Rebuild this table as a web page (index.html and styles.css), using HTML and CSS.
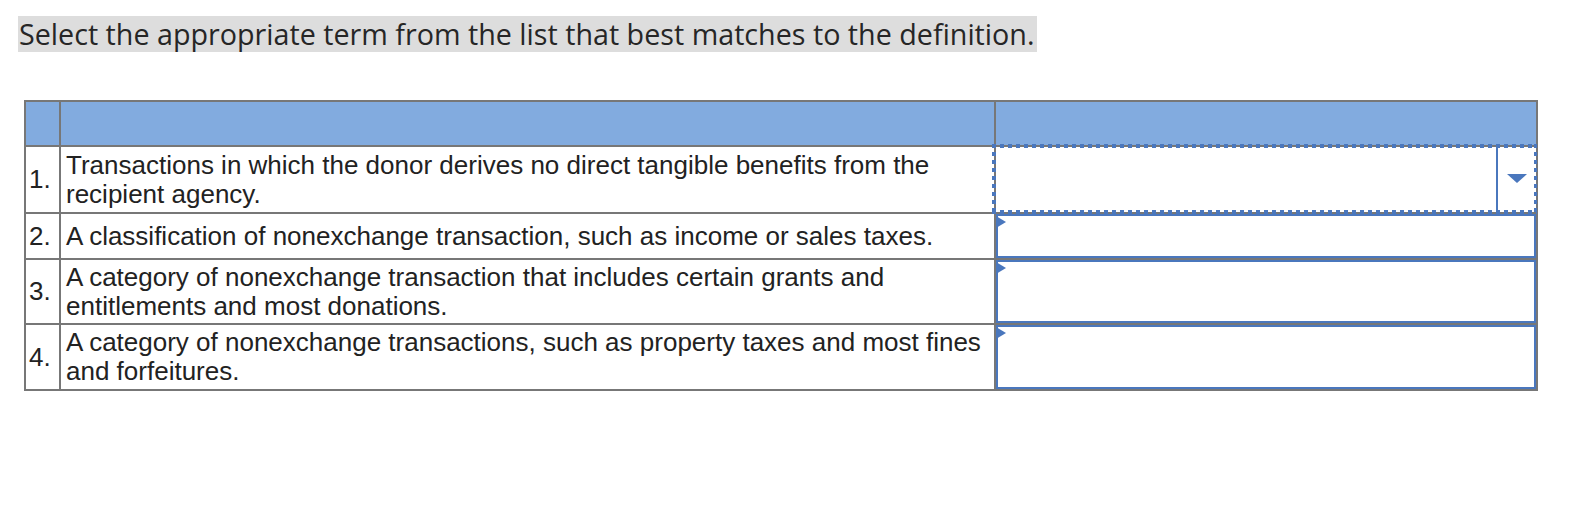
FILE: index.html
```html
<!DOCTYPE html>
<html lang="en">
<head>
<meta charset="utf-8">
<title>Matching</title>
<link rel="stylesheet" href="styles.css">
</head>
<body>
<main class="page">
  <p class="prompt"><span class="prompt__label">Select the appropriate term from the list that best matches to the definition.</span></p>
  <table class="match">
    <thead>
      <tr>
        <th class="num"></th>
        <th class="def"></th>
        <th class="ans"></th>
      </tr>
    </thead>
    <tbody>
      <tr>
        <td class="num">1.</td>
        <td class="def">Transactions in which the donor derives no direct tangible benefits from the recipient agency.</td>
        <td class="ans">
          <div class="select select--focused">
            <span class="select__value"></span>
            <span class="select__btn">
              <svg class="select__arrow" width="20" height="9" viewBox="0 0 20 9" aria-hidden="true"><polygon points="0,0 20,0 10,9"/></svg>
            </span>
          </div>
        </td>
      </tr>
      <tr>
        <td class="num">2.</td>
        <td class="def">A classification of nonexchange transaction, such as income or sales taxes.</td>
        <td class="ans"><div class="answer answer--h44"></div></td>
      </tr>
      <tr>
        <td class="num">3.</td>
        <td class="def">A category of nonexchange transaction that includes certain grants and entitlements and most donations.</td>
        <td class="ans"><div class="answer answer--h63"></div></td>
      </tr>
      <tr>
        <td class="num">4.</td>
        <td class="def">A category of nonexchange transactions, such as property taxes and most fines and forfeitures.</td>
        <td class="ans"><div class="answer answer--h64"></div></td>
      </tr>
    </tbody>
  </table>
</main>
</body>
</html>
```

FILE: styles.css
```css
:root {
  --grey: #777777;
  --blue: #4a77bd;
  --head: #82abdf;
  --ink: #222222;
}

html, body {
  margin: 0;
  background: #ffffff;
}

.page {
  padding: 16px 0 0 18px;
}

.prompt {
  margin: 0;
}

.prompt__label {
  display: inline-block;
  background: #dddddd;
  color: #262626;
  font-family: "Open Sans", Inter, sans-serif;
  font-size: 28.7px;
  line-height: 36px;
  padding: 0 3px 0 1px;
}

.match {
  margin: 48px 0 0 6px;
  border-collapse: separate;
  border-spacing: 0;
  border-top: 2px solid var(--grey);
  border-left: 2px solid var(--grey);
  font-family: "Liberation Sans", Arial, sans-serif;
  font-size: 26px;
  line-height: 29px;
  color: var(--ink);
}

.match th,
.match td {
  padding: 0;
  border-right: 2px solid var(--grey);
  border-bottom: 2px solid var(--grey);
  text-align: left;
  vertical-align: middle;
}

.match th {
  background: var(--head);
  height: 43px;
}

.num { width: 33px; }
.def { width: 933px; }
.ans { width: 540px; }

.match td.num {
  padding-left: 3px;
  width: 30px;
  white-space: nowrap;
}

.match td.def {
  padding: 0 2px 0 5px;
  width: 926px;
}

/* focused dropdown */
.select {
  position: relative;
  display: flex;
  height: 65px;
}

.select__value {
  flex: 1;
}

.select__btn {
  width: 38px;
  border-left: 2px solid var(--blue);
  display: flex;
  align-items: center;
  justify-content: center;
}

.select__arrow {
  display: block;
  fill: var(--blue);
  margin-bottom: 3px;
}

.select--focused::after {
  content: "";
  position: absolute;
  top: -3px;
  right: -1px;
  bottom: -2px;
  left: -4px;
  pointer-events: none;
  background:
    repeating-linear-gradient(to right, var(--blue) 0 4px, transparent 4px 8px) left top / 100% 4px no-repeat,
    repeating-linear-gradient(to right, var(--blue) 0 4px, transparent 4px 8px) left bottom / 100% 4px no-repeat,
    repeating-linear-gradient(to bottom, var(--blue) 0 4px, transparent 4px 8px) left top / 4px 100% no-repeat,
    repeating-linear-gradient(to bottom, var(--blue) 0 4px, transparent 4px 8px) right top / 3px 100% no-repeat;
}

/* answer boxes */
.answer {
  position: relative;
  border: 2px solid var(--blue);
}

.answer::before {
  content: "";
  position: absolute;
  left: -2px;
  top: 0;
  border-left: 10px solid var(--blue);
  border-top: 6px solid transparent;
  border-bottom: 6px solid transparent;
}

.answer--h44 { height: 40px; }
.answer--h63 { height: 59px; }
.answer--h64 { height: 60px; }
```
